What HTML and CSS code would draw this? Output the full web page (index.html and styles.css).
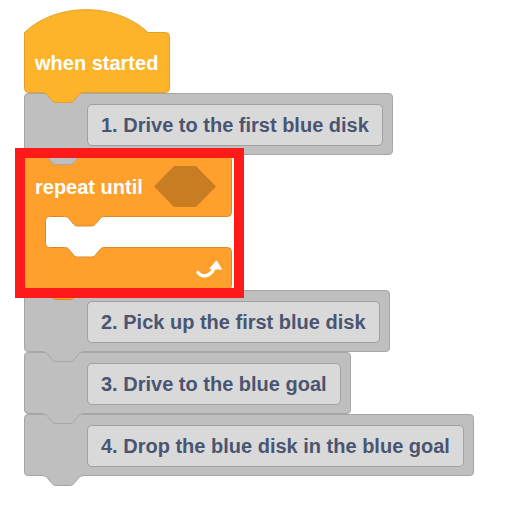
FILE: index.html
```html
<!DOCTYPE html>
<html>
<head>
<meta charset="utf-8">
<link rel="stylesheet" href="styles.css">
</head>
<body>
<div class="canvas">
  <div class="script">
    <div class="hat">
      <svg class="shape" width="146" height="84" viewBox="0 0 146 84">
        <path d="M0.5 23.5 C32 -7 92 -7 124 23.5 H141.5 Q145.5 23.5 145.5 27.5 V79.5 Q145.5 83.5 141.5 83.5 H4.5 Q0.5 83.5 0.5 79.5 Z" fill="#fdb42a" stroke="#e2a12c"/>
      </svg>
      <span class="hat-label">when started</span>
      <svg class="tab tab-svg-block tab-hat" width="42" height="12" viewBox="0 0 42 12">
        <path d="M0 0 H40 V1 C38 1 37 1.5 36 2.5 L31 8.5 C30 9.5 29 10.5 27 10.5 H13 C11 10.5 10 9.5 9 8.5 L4 2.5 C3 1.5 2 1 0 1 Z" fill="#fdb42a"/>
        <path d="M0 1 C2 1 3 1.5 4 2.5 L9 8.5 C10 9.5 11 10.5 13 10.5 H27 C29 10.5 30 9.5 31 8.5 L36 2.5 C37 1.5 38 1 40 1" fill="none" stroke="#e2a12c"/>
      </svg>
    </div>

    <div class="block">
      <div class="field">1. Drive to the first blue disk</div>
      <svg class="tab" width="42" height="12" viewBox="0 0 42 12">
        <path d="M0 0 H40 V1 C38 1 37 1.5 36 2.5 L31 8.5 C30 9.5 29 10.5 27 10.5 H13 C11 10.5 10 9.5 9 8.5 L4 2.5 C3 1.5 2 1 0 1 Z" fill="#bfbfbf"/>
        <path d="M0 1 C2 1 3 1.5 4 2.5 L9 8.5 C10 9.5 11 10.5 13 10.5 H27 C29 10.5 30 9.5 31 8.5 L36 2.5 C37 1.5 38 1 40 1" fill="none" stroke="#a6a6a6"/>
      </svg>
    </div>

    <div class="repeat">
      <svg class="shape" width="208" height="135" viewBox="0 0 208 135">
        <path d="M4.5 0.5 H203.5 Q207.5 0.5 207.5 4.5 V57.5 Q207.5 61.5 203.5 61.5 H80.5 C78.5 61.5 77.5 62 76.5 63 L71.5 69 C70.5 70 69.5 71 67.5 71 H53.5 C51.5 71 50.5 70 49.5 69 L44.5 63 C43.5 62 42.5 61.5 40.5 61.5 H25.5 Q21.5 61.5 21.5 65.5 V88.5 Q21.5 92.5 25.5 92.5 H40.5 C42.5 92.5 43.5 93 44.5 94 L49.5 100 C50.5 101 51.5 102 53.5 102 H67.5 C69.5 102 70.5 101 71.5 100 L76.5 94 C77.5 93 78.5 92.5 80.5 92.5 H203.5 Q207.5 92.5 207.5 96.5 V130.5 Q207.5 134.5 203.5 134.5 H4.5 Q0.5 134.5 0.5 130.5 V4.5 Q0.5 0.5 4.5 0.5 Z" fill="#ffa02c" stroke="#db8a2b"/>
      </svg>
      <div class="repeat-head">
        <span class="repeat-label">repeat until</span>
        <svg class="hexagon" width="62" height="41" viewBox="0 0 62 41">
          <polygon points="0,20.5 20,0 42,0 62,20.5 42,41 20,41" fill="#c97d23"/>
        </svg>
      </div>
      <div class="mouth"></div>
      <div class="repeat-foot">
        <svg class="loop-arrow" width="26" height="18" viewBox="0 0 26 18">
          <path d="M2 12.5 C4 16 9 17 13 14.5 C15.5 13 17 11 18 8.5" fill="none" stroke="#ffffff" stroke-width="3.4" stroke-linecap="round"/>
          <polygon points="20.5,0.8 25.5,9.2 13.8,8.6" fill="#ffffff" stroke="#ffffff" stroke-width="1" stroke-linejoin="round"/>
        </svg>
      </div>
      <svg class="tab tab-repeat" width="42" height="12" viewBox="0 0 42 12">
        <path d="M0 0 H40 V1 C38 1 37 1.5 36 2.5 L31 8.5 C30 9.5 29 10.5 27 10.5 H13 C11 10.5 10 9.5 9 8.5 L4 2.5 C3 1.5 2 1 0 1 Z" fill="#ffa02c"/>
        <path d="M0 1 C2 1 3 1.5 4 2.5 L9 8.5 C10 9.5 11 10.5 13 10.5 H27 C29 10.5 30 9.5 31 8.5 L36 2.5 C37 1.5 38 1 40 1" fill="none" stroke="#db8a2b"/>
      </svg>
    </div>

    <div class="block">
      <div class="field">2. Pick up the first blue disk</div>
      <svg class="tab" width="42" height="12" viewBox="0 0 42 12">
        <path d="M0 0 H40 V1 C38 1 37 1.5 36 2.5 L31 8.5 C30 9.5 29 10.5 27 10.5 H13 C11 10.5 10 9.5 9 8.5 L4 2.5 C3 1.5 2 1 0 1 Z" fill="#bfbfbf"/>
        <path d="M0 1 C2 1 3 1.5 4 2.5 L9 8.5 C10 9.5 11 10.5 13 10.5 H27 C29 10.5 30 9.5 31 8.5 L36 2.5 C37 1.5 38 1 40 1" fill="none" stroke="#a6a6a6"/>
      </svg>
    </div>

    <div class="block">
      <div class="field">3. Drive to the blue goal</div>
      <svg class="tab" width="42" height="12" viewBox="0 0 42 12">
        <path d="M0 0 H40 V1 C38 1 37 1.5 36 2.5 L31 8.5 C30 9.5 29 10.5 27 10.5 H13 C11 10.5 10 9.5 9 8.5 L4 2.5 C3 1.5 2 1 0 1 Z" fill="#bfbfbf"/>
        <path d="M0 1 C2 1 3 1.5 4 2.5 L9 8.5 C10 9.5 11 10.5 13 10.5 H27 C29 10.5 30 9.5 31 8.5 L36 2.5 C37 1.5 38 1 40 1" fill="none" stroke="#a6a6a6"/>
      </svg>
    </div>

    <div class="block">
      <div class="field">4. Drop the blue disk in the blue goal</div>
      <svg class="tab" width="42" height="12" viewBox="0 0 42 12">
        <path d="M0 0 H40 V1 C38 1 37 1.5 36 2.5 L31 8.5 C30 9.5 29 10.5 27 10.5 H13 C11 10.5 10 9.5 9 8.5 L4 2.5 C3 1.5 2 1 0 1 Z" fill="#bfbfbf"/>
        <path d="M0 1 C2 1 3 1.5 4 2.5 L9 8.5 C10 9.5 11 10.5 13 10.5 H27 C29 10.5 30 9.5 31 8.5 L36 2.5 C37 1.5 38 1 40 1" fill="none" stroke="#a6a6a6"/>
      </svg>
    </div>
  </div>
  <div class="highlight"></div>
</div>
</body>
</html>
```

FILE: styles.css
```css
html, body {
  margin: 0;
  padding: 0;
  background: #ffffff;
}

.canvas {
  position: relative;
  width: 525px;
  height: 514px;
  box-sizing: border-box;
  padding: 9px 0 0 24px;
  font-family: "Liberation Sans", Arial, sans-serif;
  font-weight: bold;
  font-size: 20px;
}

.script {
  display: flex;
  flex-direction: column;
  align-items: flex-start;
}

.shape {
  position: absolute;
  left: 0;
  top: 0;
  display: block;
}

.tab {
  position: absolute;
  top: 100%;
  left: 18px;
  z-index: 2;
  display: block;
}

.tab-hat,
.tab-repeat {
  top: calc(100% - 1px);
  left: 19px;
}

/* hat block */
.hat {
  position: relative;
  width: 146px;
  height: 84px;
  box-sizing: border-box;
  padding: 43px 0 0 11px;
  color: #ffffff;
}

.hat-label {
  position: relative;
  display: block;
  white-space: nowrap;
}

/* gray command block */
.block {
  position: relative;
  display: flex;
  padding: 10px 9px 8px 62px;
  border: 1px solid #a6a6a6;
  border-radius: 4px;
  background: #bfbfbf;
}

.field {
  display: flex;
  align-items: center;
  height: 42px;
  box-sizing: border-box;
  padding: 0 13px;
  border: 1px solid #a1a1a1;
  border-radius: 5px;
  background: #d9d9d9;
  color: #4a5572;
  white-space: nowrap;
}

/* repeat (C) block */
.repeat {
  position: relative;
  width: 208px;
  height: 135px;
  display: flex;
  flex-direction: column;
}

.repeat-head {
  position: relative;
  height: 62px;
  box-sizing: border-box;
  padding: 0 0 0 11px;
  display: flex;
  align-items: center;
  gap: 11px;
  color: #ffffff;
}

.repeat-label {
  padding-top: 3px;
  white-space: nowrap;
}

.hexagon {
  display: block;
}

.mouth {
  height: 31px;
}

.repeat-foot {
  position: relative;
  height: 42px;
  box-sizing: border-box;
  padding: 12px 10px 0 0;
  display: flex;
  justify-content: flex-end;
  align-items: flex-start;
}

.loop-arrow {
  display: block;
}

/* red highlight overlay */
.highlight {
  position: absolute;
  left: 15px;
  top: 148px;
  width: 229px;
  height: 150px;
  box-sizing: border-box;
  border: 10px solid #ff1a1a;
  z-index: 3;
}
```
